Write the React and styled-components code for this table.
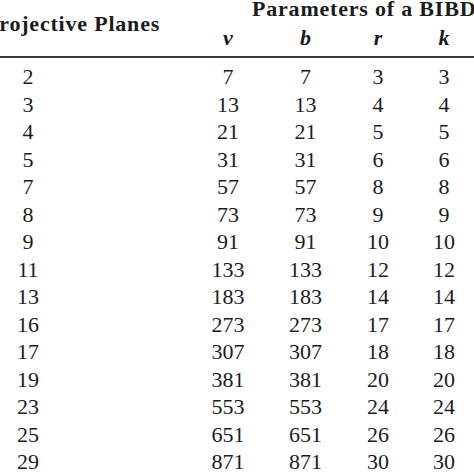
import React from "react";
import styled, { createGlobalStyle } from "styled-components";

const Global = createGlobalStyle`
  html, body {
    margin: 0;
    padding: 0;
    background: #ffffff;
  }
  body {
    width: 474px;
    height: 474px;
    overflow: hidden;
    font-family: "Liberation Serif", "Times New Roman", serif;
    color: #1c1c1c;
  }
`;

const COLS = "190px 76px 79px 66px 66px";

const Table = styled.div`
  display: flex;
  flex-direction: column;
  width: 477px;
`;

const Header = styled.div`
  display: grid;
  grid-template-columns: ${COLS};
  grid-template-rows: 27px 29px;
  border-bottom: 2px solid #3a3a3a;
  font-weight: 700;
  font-size: 22px;
  line-height: 22px;
  letter-spacing: 0.8px;
`;

const GroupTitle = styled.div`
  grid-column: ${(p) => p.$col};
  grid-row: ${(p) => p.$row};
  align-self: start;
  white-space: nowrap;
  margin-top: ${(p) => p.$top}px;
  margin-left: ${(p) => p.$left}px;
`;

const VarLabel = styled.div`
  grid-row: 2;
  align-self: start;
  text-align: center;
  font-style: italic;
  letter-spacing: 0;
`;

const Body = styled.div`
  display: flex;
  flex-direction: column;
  padding-top: 5px;
  font-size: 22px;
  line-height: 27.5px;
`;

const Row = styled.div`
  display: grid;
  grid-template-columns: ${COLS};
  height: 27.5px;
`;

const Cell = styled.div`
  text-align: center;
  white-space: nowrap;
  ${(p) => (p.$narrow ? "width: 56px;" : "")}
`;

const rows = [
  [2, 7, 7, 3, 3],
  [3, 13, 13, 4, 4],
  [4, 21, 21, 5, 5],
  [5, 31, 31, 6, 6],
  [7, 57, 57, 8, 8],
  [8, 73, 73, 9, 9],
  [9, 91, 91, 10, 10],
  [11, 133, 133, 12, 12],
  [13, 183, 183, 14, 14],
  [16, 273, 273, 17, 17],
  [17, 307, 307, 18, 18],
  [19, 381, 381, 20, 20],
  [23, 553, 553, 24, 24],
  [25, 651, 651, 26, 26],
  [29, 871, 871, 30, 30],
];

export default function App() {
  return (
    <>
      <Global />
      <Table>
        <Header>
          <GroupTitle $col="1" $row="1 / span 2" $top={13} $left={-15}>
            Projective Planes
          </GroupTitle>
          <GroupTitle $col="2 / -1" $row="1" $top={-2} $left={62}>
            Parameters of a BIBD
          </GroupTitle>
          <VarLabel style={{ gridColumn: 2 }}>v</VarLabel>
          <VarLabel style={{ gridColumn: 3 }}>b</VarLabel>
          <VarLabel style={{ gridColumn: 4 }}>r</VarLabel>
          <VarLabel style={{ gridColumn: 5 }}>k</VarLabel>
        </Header>
        <Body>
          {rows.map((r) => (
            <Row key={r[0]}>
              <Cell $narrow>{r[0]}</Cell>
              <Cell>{r[1]}</Cell>
              <Cell>{r[2]}</Cell>
              <Cell>{r[3]}</Cell>
              <Cell>{r[4]}</Cell>
            </Row>
          ))}
        </Body>
      </Table>
    </>
  );
}
